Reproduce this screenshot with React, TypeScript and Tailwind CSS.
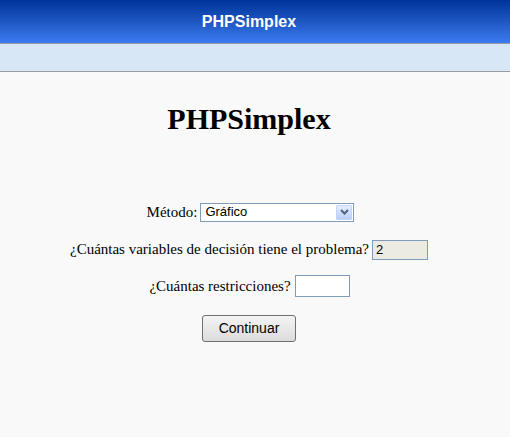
export default function App() {
  return (
    <div className="min-h-[437px] bg-[#f9f9f9] font-['Liberation_Serif',serif] text-black">
      {/* top bar */}
      <div className="h-[43px] pr-[12px] bg-gradient-to-b from-[#003399] to-[#3b7bef] flex items-center justify-center">
        <span className="text-white font-bold text-[16px] font-['Liberation_Sans',Arial,sans-serif]">PHPSimplex</span>
      </div>
      <div className="h-[29px] border-t border-b border-[#9a9ca0] bg-[#d8e7f6]" />

      <div className="pr-[12px]">
        <h1 className="text-center font-bold text-[30px] mt-[27px] leading-[40px]">PHPSimplex</h1>

        <div className="flex flex-col items-center mt-[63px] text-[15px]">
          <div className="flex items-center gap-[3px] h-[20px] pl-[3px]">
            <span>Método:</span>
            <div className="flex items-center w-[154px] h-[19px] border border-[#7f9db9] bg-white font-['Liberation_Sans',Arial,sans-serif] text-[13px]">
              <span className="flex-1 pl-[4px]">Gráfico</span>
              <span className="w-[16px] h-[15px] mr-[1px] rounded-[1px] bg-gradient-to-b from-[#e6eefc] to-[#b9cdf5] border border-[#c3d3fd] flex items-center justify-center">
                <svg width="9" height="6" viewBox="0 0 9 6">
                  <path d="M1 1 L4.5 4.5 L8 1" stroke="#4d6185" strokeWidth="2" fill="none" />
                </svg>
              </span>
            </div>
          </div>

          <div className="flex items-center gap-[3px] mt-[17px] h-[21px]">
            <span>¿Cuántas variables de decisión tiene el problema?</span>
            <div className="w-[56px] h-[20px] border border-[#7f9db9] bg-[#ebebe4] font-['Liberation_Sans',Arial,sans-serif] text-[13px] pl-[3px] leading-[18px]">2</div>
          </div>

          <div className="flex items-center gap-[4px] mt-[15px] h-[22px] pl-[1px]">
            <span>¿Cuántas restricciones?</span>
            <input className="w-[55px] h-[22px] border border-[#7f9db9] bg-white outline-none" />
          </div>

          <button className="mt-[18px] w-[94px] h-[27px] rounded-[3px] border border-[#707070] bg-gradient-to-b from-[#f4f4f4] to-[#dcdcdc] font-['Liberation_Sans',Arial,sans-serif] text-[14px] text-black">
            Continuar
          </button>
        </div>
      </div>
    </div>
  )
}
